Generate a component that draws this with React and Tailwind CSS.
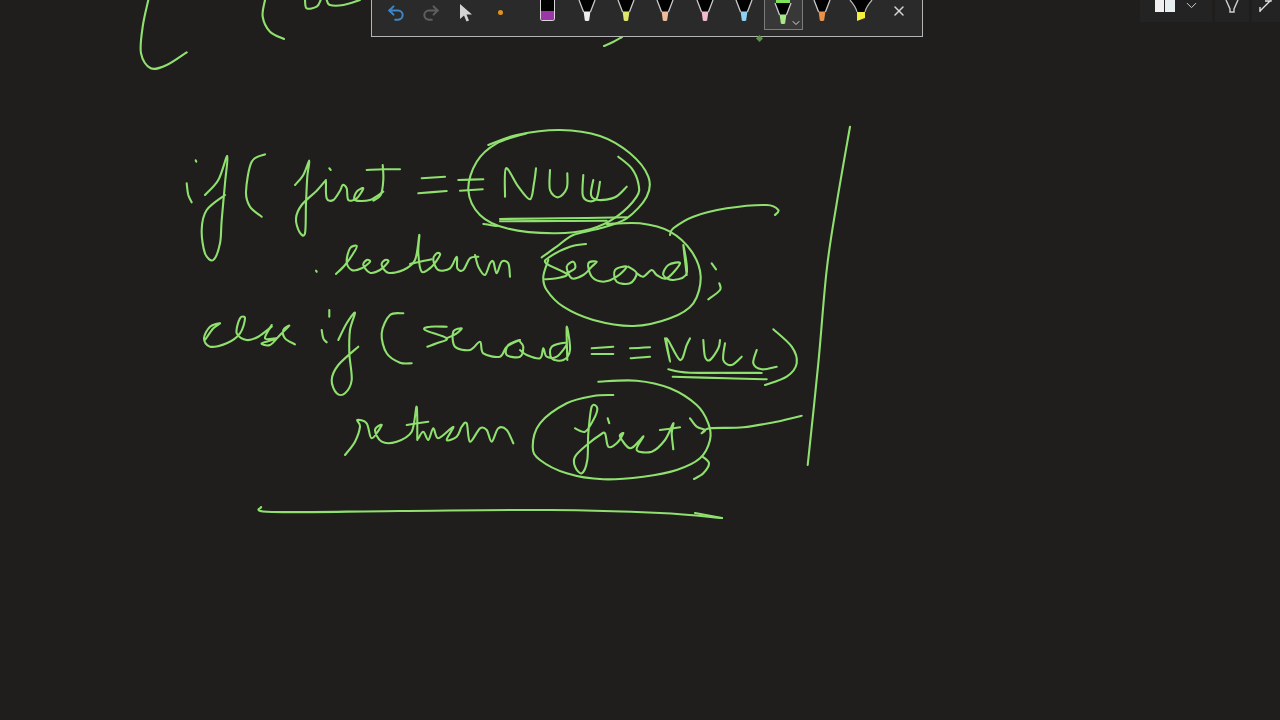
import React from 'react'
import { ChevronDown, Redo2, Undo2, X } from 'lucide-react'

// ink strokes are noted in 3x crop coords, [originX, originY] gives the page offset
const A = [170, 120]
const B = [460, 120]
const C = [190, 310]
const D = [510, 320]
const E = [130, 0]
const R = [0, 0]

const strokes = [
  // top leftovers
  [E, [[55, 0], [38, 80], [33, 160], [62, 205], [110, 195], [170, 157]]],
  [E, [[405, 0], [398, 50], [420, 95], [462, 117]]],
  [E, [[525, 0], [530, 25], [560, 20], [572, 0]]],
  [E, [[590, 0], [600, 15], [640, 15], [690, 0]]],
  [R, [[604, 46], [613, 42], [622, 37]]],

  // if ( first ==
  [A, [[50, 190], [55, 225], [65, 247]]],
  [A, [[77, 121], [79, 125]]],
  [A, [[105, 225], [145, 180], [172, 108], [165, 190], [155, 300], [150, 370], [130, 420], [105, 400], [95, 330], [110, 270], [165, 225]]],
  [A, [[285, 103], [245, 125], [228, 215], [240, 260], [275, 290]]],
  [A, [[375, 195], [400, 165], [418, 122], [412, 170], [408, 250], [405, 340], [388, 335], [378, 295], [395, 255], [440, 212], [468, 180]]],
  [A, [[478, 145], [482, 150]]],
  [A, [[468, 185], [470, 235], [490, 240], [510, 212], [518, 195], [530, 205], [535, 240], [560, 235], [580, 205], [560, 215], [555, 240], [600, 240], [640, 215]]],
  [A, [[638, 135], [640, 180], [632, 225], [610, 242]]],
  [A, [[590, 150], [640, 148], [690, 148]]],
  [A, [[755, 175], [825, 170]]],
  [A, [[745, 220], [830, 213]]],
  [A, [[865, 180], [940, 178]]],
  [A, [[870, 212], [938, 208]]],

  // NULL ellipse
  [B, [[85, 75], [170, 45], [300, 30], [420, 48], [510, 100], [565, 170], [560, 230], [500, 295], [420, 325], [340, 345], [290, 380], [245, 412]]],
  [B, [[200, 40], [110, 70], [50, 125], [25, 210], [60, 285], [140, 325], [280, 340], [390, 328], [470, 290], [530, 230], [535, 190], [515, 145], [475, 110]]],
  [B, [[135, 230], [138, 145], [175, 200], [210, 238], [222, 190], [228, 145]]],
  [B, [[270, 150], [270, 210], [295, 232], [320, 205], [322, 160]]],
  [B, [[370, 165], [368, 225], [385, 243], [410, 235], [420, 185]]],
  [B, [[400, 180], [393, 225], [415, 240], [465, 232], [500, 200]]],
  [B, [[120, 297], [300, 295], [500, 292]]],
  [B, [[120, 304], [300, 303], [440, 302]]],
  [B, [[70, 312], [110, 318]]],

  // return second ;
  [A, [[498, 462], [525, 435], [550, 400], [560, 378], [540, 385], [530, 425], [545, 450], [575, 445], [600, 425], [590, 420], [580, 435], [600, 458], [630, 450], [655, 425], [645, 420], [635, 435], [655, 458], [700, 450], [735, 420], [748, 345], [745, 400], [755, 455], [785, 440], [810, 405], [800, 400], [790, 420], [805, 450], [840, 445], [860, 410], [862, 445], [880, 450], [900, 415], [925, 410]]],
  [A, [[720, 432], [750, 425], [785, 418]]],
  [B, [[45, 405], [55, 440], [75, 465], [90, 430], [100, 425], [110, 460], [125, 425], [145, 430], [150, 470]]],
  [A, [[438, 452], [440, 455]]],
  [B, [[440, 312], [540, 310], [630, 335], [695, 395], [722, 470], [700, 550], [630, 595], [520, 618], [400, 600], [310, 560], [260, 510], [250, 470], [265, 420]]],
  [B, [[378, 372], [330, 380], [270, 410], [258, 430], [320, 462], [290, 475], [255, 478]]],
  [B, [[320, 460], [345, 445], [340, 425], [320, 440], [335, 475], [370, 465], [395, 440], [410, 425], [385, 430], [395, 470], [430, 485], [470, 470], [500, 440], [465, 450], [470, 485], [510, 490], [530, 460], [505, 440]]],
  [B, [[530, 460], [550, 470], [575, 450], [590, 465], [620, 475], [660, 430], [625, 435], [610, 465], [640, 480], [680, 460], [670, 375], [680, 465]]],
  [B, [[755, 430], [768, 448]]],
  [B, [[778, 490], [780, 510], [745, 538]]],
  [B, [[630, 345], [640, 325], [700, 290], [800, 265], [920, 255], [955, 270], [945, 285]]],
  [B, [[1170, 20], [1130, 250], [1100, 450], [1075, 730], [1043, 1035]]],

  // else if ( second == NULL)
  [C, [[45, 90], [70, 55], [90, 40], [60, 50], [42, 85], [60, 110], [110, 100], [150, 70], [165, 25], [150, 25], [140, 70], [170, 90], [205, 80], [245, 50]]],
  [C, [[245, 45], [225, 85], [260, 85], [215, 100], [240, 105], [270, 75], [298, 47], [280, 60], [285, 85], [315, 103]]],
  [C, [[395, 60], [400, 85], [410, 97]]],
  [C, [[418, 0], [418, 20]]],
  [C, [[445, 90], [470, 40], [495, 8], [480, 60], [478, 130], [485, 210], [465, 250], [440, 250], [425, 210], [445, 165], [505, 110]]],
  [C, [[640, 10], [600, 15], [575, 70], [590, 130], [630, 158], [665, 160]]],
  [C, [[770, 50], [720, 50], [705, 60], [770, 85], [740, 100], [712, 110]]],
  [C, [[770, 85], [800, 70], [815, 55], [790, 65], [795, 110], [840, 120], [870, 95], [880, 130], [930, 140], [950, 110], [990, 90], [955, 105], [950, 135], [990, 140], [1000, 110], [990, 95]]],
  [D, [[30, 90], [50, 105], [90, 115], [100, 85], [110, 110], [140, 110], [170, 70], [125, 80], [125, 115], [160, 120], [180, 90], [170, 20], [172, 120]]],
  [D, [[245, 85], [310, 80]]],
  [D, [[245, 102], [310, 102]]],
  [D, [[360, 85], [420, 82]]],
  [D, [[362, 115], [420, 110]]],
  [D, [[465, 55], [480, 125], [470, 55], [510, 120], [530, 75], [540, 55]]],
  [D, [[580, 60], [585, 110], [600, 120], [625, 85], [630, 60]]],
  [D, [[645, 70], [640, 120], [665, 135], [695, 110]]],
  [D, [[740, 90], [730, 130], [755, 148], [800, 140]]],
  [D, [[790, 28], [845, 80], [860, 130], [830, 170], [765, 195]]],
  [D, [[475, 148], [540, 158], [750, 158]]],
  [D, [[645, 159], [755, 159]]],
  [D, [[488, 170], [650, 175], [770, 178]]],

  // return first
  [C, [[465, 435], [495, 395], [510, 350], [502, 330], [530, 340], [545, 385], [575, 345], [555, 360], [575, 395], [620, 395], [665, 365], [680, 290], [682, 390]]],
  [C, [[650, 345], [715, 335]]],
  [C, [[685, 385], [700, 365], [715, 390], [730, 355], [745, 385], [790, 350], [770, 390], [800, 380], [815, 350], [830, 340], [840, 395], [870, 355], [890, 360], [905, 395], [925, 355], [950, 360], [970, 400]]],
  [D, [[265, 185], [380, 182], [480, 205], [560, 255], [595, 310], [600, 360], [570, 415], [500, 450], [400, 470], [280, 478], [170, 460], [90, 420], [68, 380], [90, 310], [170, 250], [250, 228], [310, 225]]],
  [D, [[195, 325], [225, 335], [250, 300], [262, 265], [245, 260], [235, 340], [232, 420], [215, 460], [195, 440], [195, 410], [230, 375], [270, 345], [285, 340], [295, 380], [320, 370], [340, 340], [330, 350], [360, 385], [390, 360], [400, 350], [380, 390], [425, 395], [465, 360], [490, 310], [485, 340], [490, 388]]],
  [D, [[293, 295], [298, 310]]],
  [D, [[450, 330], [510, 322]]],
  [D, [[540, 295], [560, 320], [585, 330], [575, 340], [600, 325], [700, 322], [800, 305], [875, 287]]],
  [D, [[578, 410], [597, 430], [580, 460], [552, 477]]],

  // rule under the block
  [R, [[261, 507], [272, 512], [400, 511], [550, 510], [660, 513], [722, 518]]],
  [R, [[695, 513], [722, 518]]],
]

// catmull-rom through the points so the ink stays round
const toPath = ([origin, pts]) => {
  const scale = origin === R ? 1 : 1 / 3
  const p = pts.map(([x, y]) => [origin[0] + x * scale, origin[1] + y * scale])
  let d = `M${p[0][0].toFixed(1)} ${p[0][1].toFixed(1)}`
  for (let i = 0; i < p.length - 1; i++) {
    const p0 = p[i - 1] || p[i]
    const p1 = p[i]
    const p2 = p[i + 1]
    const p3 = p[i + 2] || p2
    const c1 = [p1[0] + (p2[0] - p0[0]) / 6, p1[1] + (p2[1] - p0[1]) / 6]
    const c2 = [p2[0] - (p3[0] - p1[0]) / 6, p2[1] - (p3[1] - p1[1]) / 6]
    d += `C${c1[0].toFixed(1)} ${c1[1].toFixed(1)} ${c2[0].toFixed(1)} ${c2[1].toFixed(1)} ${p2[0].toFixed(1)} ${p2[1].toFixed(1)}`
  }
  return d
}

const Pen = ({ tip }) => (
  <svg className="shrink-0" width="20" height="24" viewBox="0 0 20 24">
    <path d="M2 0 L7 12 L8 21 H12 L13 12 L18 0 Z" fill="#000" />
    <path d="M2 0 L6.6 12 M18 0 L13.4 12" fill="none" stroke="#c9c9c9" strokeWidth="1.3" />
    <path d="M6.6 11.5 H13.4 L12.2 20.5 Q10 21.5 7.8 20.5 Z" fill={tip} />
  </svg>
)

const Marker = () => (
  <div className="flex h-[21px] w-[15px] flex-col overflow-hidden rounded-b-[3px] border border-t-0 border-[#d8d8d8] bg-black">
    <div className="mt-auto h-[9px] bg-[#9c36a8]" />
  </div>
)

const Highlighter = () => (
  <svg className="shrink-0" width="24" height="24" viewBox="0 0 24 24">
    <path d="M1 0 Q7 7 8 12 V21 L16 18 V12 Q17 7 23 0 Z" fill="#000" />
    <path d="M1 0 Q7 7 8 12 M23 0 Q17 7 16 12" fill="none" stroke="#b9b9b9" strokeWidth="1.2" />
    <path d="M8 12 H16 V18 L8 21 Z" fill="#f4ee3c" />
  </svg>
)

const penTips = ['#eeeeee', '#dfe66c', '#eebc9a', '#f2bccb', '#8ed4f2']

const App = () => {
  return (
    <div className="relative h-[720px] w-full overflow-hidden bg-[#1f1e1c]">
      <svg className="block h-full w-full" viewBox="0 0 1280 720" fill="none" stroke="#8fe06f" strokeWidth="2.1" strokeLinecap="round" strokeLinejoin="round">
        {strokes.map((s, i) => (
          <path key={i} d={toPath(s)} />
        ))}
      </svg>

      {/* ink toolbar */}
      <div className="absolute left-[371px] top-0 flex h-[37px] w-[552px] items-center border-x-[1.5px] border-b-[1.5px] border-[#b4b4b4] bg-[#2a2a2a] pb-[11px]">
        <div className="flex items-center pl-[6px]">
          <div className="flex w-[35px] justify-center"><Undo2 size={20} strokeWidth={2.4} color="#3f86c9" /></div>
          <div className="flex w-[35px] justify-center"><Redo2 size={20} strokeWidth={2.4} color="#5f5f5f" /></div>
          <div className="flex w-[35px] justify-center">
            <svg width="16" height="18" viewBox="0 0 16 18">
              <path d="M2 0 V15 L6 11.5 L8.5 17.5 L11 16.5 L8.5 10.5 H14 Z" fill="#d4d4d4" />
            </svg>
          </div>
          <div className="flex w-[35px] justify-center"><div className="h-[5px] w-[5px] rounded-full bg-[#e0931f]" /></div>
        </div>
        <div className="ml-[17px] flex h-[25px] items-start">
          <div className="flex w-[24px] justify-center"><Marker /></div>
          <div className="ml-[8px] flex">
            {penTips.map((tip) => (
              <div key={tip} className="flex w-[39.3px] justify-center"><Pen tip={tip} /></div>
            ))}
          </div>
        </div>
      </div>

      {/* selected pen + rest of row sit over the toolbar edge */}
      <div className="absolute left-[764px] top-0 flex h-[30px] w-[39px] justify-center border-x border-b border-[#7c7c7c] bg-[#383838]">
        <div className="relative mr-[2px] h-[28px] w-[20px]">
          <div className="absolute left-[3px] top-0 h-[3px] w-[14px] bg-[#7fe35a]" />
          <div className="absolute left-0 top-[3px]"><Pen tip="#a8e88c" /></div>
        </div>
        <ChevronDown className="absolute left-[25px] top-[17px]" size={12} strokeWidth={2} color="#d8d8d8" />
      </div>
      <div className="absolute left-[812px] top-0 flex items-start">
        <Pen tip="#e8914a" />
        <div className="ml-[17px]"><Highlighter /></div>
        <X className="ml-[18px] mt-[3px]" size={16} strokeWidth={2.2} color="#d6d6d6" />
      </div>
      <div className="absolute left-[757px] top-[36px] h-[5px] w-[5px] rotate-45 bg-[#5f8f4f]" />

      {/* window controls top right */}
      <div className="absolute right-0 top-0 flex h-[22px] items-start gap-[3px]">
        <div className="flex h-full w-[72px] justify-center gap-[8px] bg-[#232323] pl-[2px]">
          <div className="flex h-[12px] w-[20px] gap-px">
            <div className="flex-1 bg-[#f0f0f0]" />
            <div className="flex-1 bg-[#e6eef0]" />
          </div>
          <ChevronDown className="mt-[-3px]" size={17} strokeWidth={1.4} color="#cfcfcf" />
        </div>
        <div className="flex h-full w-[34px] justify-center bg-[#232323]">
          <svg width="14" height="14" viewBox="0 0 14 14" fill="none" stroke="#d0d0d0" strokeWidth="1.4">
            <path d="M1 0 L5 9 V12 H9 V9 L13 0" />
          </svg>
        </div>
        <div className="flex h-full w-[28px] justify-center bg-[#232323]">
          <svg width="14" height="14" viewBox="0 0 14 14" fill="none" stroke="#e0e0e0" strokeWidth="1.4">
            <path d="M1 11 L11 1 M6 1 H12 V0 M1 7 V12" />
          </svg>
        </div>
      </div>
    </div>
  )
}

export default App
